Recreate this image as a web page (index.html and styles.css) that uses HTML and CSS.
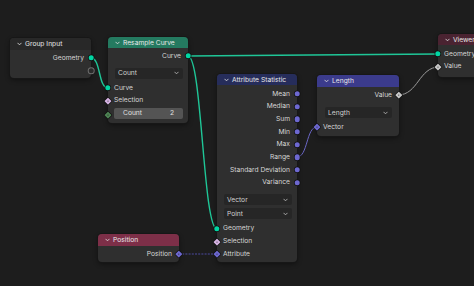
FILE: index.html
```html
<!DOCTYPE html>
<html lang="en">
<head>
  <meta charset="UTF-8" />
  <title>Geometry Nodes</title>
  <link rel="stylesheet" href="styles.css">
</head>
<body>
  <div class="editor">

    <!-- links are drawn under the nodes -->
    <svg class="links" width="474" height="286" viewBox="0 0 474 286">
      <path class="lk geo" d="M91,58 C101,58 98,88 108,88" />
      <path class="lk geo" d="M188,56 C260,56 370,54 439,54" />
      <path class="lk geo" d="M188,56 C202,56 203,229 217,229" />
      <path class="lk val" d="M398,95 C418,95 419,67 439,67" />
      <path class="lk vec" d="M297,157 C308,157 306,127 317,127" />
      <path class="lk vec dash" d="M179,254 L217,254" />
    </svg>

    <!-- Group Input -->
    <div class="node n-group">
      <div class="node-head h-group"><svg class="chev" viewBox="0 0 6 4"><path d="M0.6,0.6 L3,3 L5.4,0.6" /></svg>Group Input</div>
      <div class="node-body">
        <div class="row out">Geometry<span class="sock geo"></span></div>
        <div class="row out"><span class="sock empty"></span></div>
      </div>
    </div>

    <!-- Resample Curve -->
    <div class="node n-resample">
      <div class="node-head h-geo"><svg class="chev" viewBox="0 0 6 4"><path d="M0.6,0.6 L3,3 L5.4,0.6" /></svg>Resample Curve</div>
      <div class="node-body">
        <div class="row out">Curve<span class="sock geo"></span></div>
        <div class="select sel-resample">Count<svg class="chev small" viewBox="0 0 6 4"><path d="M0.6,0.6 L3,3 L5.4,0.6" /></svg></div>
        <div class="row in"><span class="sock geo"></span>Curve</div>
        <div class="row in"><span class="sock field bool"></span>Selection</div>
        <div class="num-row">
          <span class="sock field int"></span>
          <div class="num"><span>Count</span><span>2</span></div>
        </div>
      </div>
    </div>

    <!-- Attribute Statistic -->
    <div class="node n-stat">
      <div class="node-head h-conv"><svg class="chev" viewBox="0 0 6 4"><path d="M0.6,0.6 L3,3 L5.4,0.6" /></svg>Attribute Statistic</div>
      <div class="node-body">
        <div class="row out">Mean<span class="sock vec"></span></div>
        <div class="row out">Median<span class="sock vec"></span></div>
        <div class="row out">Sum<span class="sock vec"></span></div>
        <div class="row out">Min<span class="sock vec"></span></div>
        <div class="row out">Max<span class="sock vec"></span></div>
        <div class="row out">Range<span class="sock vec"></span></div>
        <div class="row out">Standard Deviation<span class="sock vec"></span></div>
        <div class="row out">Variance<span class="sock vec"></span></div>
        <div class="select sel-stat first">Vector<svg class="chev small" viewBox="0 0 6 4"><path d="M0.6,0.6 L3,3 L5.4,0.6" /></svg></div>
        <div class="select sel-stat second">Point<svg class="chev small" viewBox="0 0 6 4"><path d="M0.6,0.6 L3,3 L5.4,0.6" /></svg></div>
        <div class="row in"><span class="sock geo"></span>Geometry</div>
        <div class="row in"><span class="sock field bool"></span>Selection</div>
        <div class="row in"><span class="sock field vecf"></span>Attribute</div>
      </div>
    </div>

    <!-- Length -->
    <div class="node n-length">
      <div class="node-head h-vec"><svg class="chev" viewBox="0 0 6 4"><path d="M0.6,0.6 L3,3 L5.4,0.6" /></svg>Length</div>
      <div class="node-body">
        <div class="row out">Value<span class="sock field valf"></span></div>
        <div class="select sel-length">Length<svg class="chev small" viewBox="0 0 6 4"><path d="M0.6,0.6 L3,3 L5.4,0.6" /></svg></div>
        <div class="row in"><span class="sock field vecf"></span>Vector</div>
      </div>
    </div>

    <!-- Viewer -->
    <div class="node n-viewer">
      <div class="node-head h-out"><svg class="chev" viewBox="0 0 6 4"><path d="M0.6,0.6 L3,3 L5.4,0.6" /></svg>Viewer</div>
      <div class="node-body">
        <div class="row in"><span class="sock geo"></span>Geometry</div>
        <div class="row in"><span class="sock field valf"></span>Value</div>
      </div>
    </div>

    <!-- Position -->
    <div class="node n-position">
      <div class="node-head h-input"><svg class="chev" viewBox="0 0 6 4"><path d="M0.6,0.6 L3,3 L5.4,0.6" /></svg>Position</div>
      <div class="node-body">
        <div class="row out">Position<span class="sock field vecf"></span></div>
      </div>
    </div>

  </div>
</body>
</html>
```

FILE: styles.css
```css
/* base */
*, *::before, *::after { box-sizing: border-box; }
body {
  margin: 0;
  background: #1d1d1d;
  overflow: hidden;
  font-family: Inter, "DejaVu Sans", sans-serif;
}

.editor {
  position: relative;
  width: 474px;
  height: 286px;
  overflow: hidden;
}

/* links */
.links { position: absolute; left: 0; top: 0; }
.lk { fill: none; stroke-width: 1.4; }
.lk.geo { stroke: #1fc697; }
.lk.val { stroke: #9a9a9a; stroke-width: 1; }
.lk.vec { stroke: #6a66c4; stroke-width: 1; }
.lk.dash { stroke: #4c4aa0; stroke-dasharray: 2 1.2; }

/* nodes */
.node {
  position: absolute;
  background: #2f2f2f;
  border-radius: 4px;
  box-shadow: 0 0 0 1px #171717, 0 2px 5px rgba(0, 0, 0, 0.45);
  color: #d6d6d6;
  font-size: 6.7px;
}
.node-head {
  display: flex;
  align-items: center;
  gap: 3px;
  height: 11px;
  padding-left: 7px;
  border-radius: 4px 4px 0 0;
  color: #e8e8e8;
  white-space: nowrap;
}
.chev { width: 5px; height: 4px; flex: none; }
.chev path { fill: none; stroke: #e0e0e0; stroke-width: 1; }
.chev.small path { stroke: #bdbdbd; }

.h-group { background: #282828; height: 12px; }
.h-geo   { background: #247a60; }
.h-conv  { background: #262d5b; }
.h-vec   { background: #3b3b8c; height: 12px; }
.h-out   { background: #4a2331; }
.h-input { background: #7d2f48; height: 12px; }

.node-body { display: flex; flex-direction: column; }

.row {
  position: relative;
  height: 12.7px;
  line-height: 12.7px;
  white-space: nowrap;
}
.row.out { text-align: right; padding-right: 7px; }
.row.in  { padding-left: 6px; }

/* sockets */
.sock {
  position: absolute;
  top: 50%;
  width: 5.4px;
  height: 5.4px;
  border-radius: 50%;
  box-shadow: 0 0 0 0.7px #111;
}
.out .sock { right: 0; transform: translate(50%, -50%); }
.in .sock, .num-row .sock { left: 0; transform: translate(-50%, -50%); }
.sock.geo { background: #00d6a3; }
.sock.vec { background: #6d68d0; }
.sock.empty { background: #2a2a2a; box-shadow: 0 0 0 1px #6e6e6e; }

.sock.field {
  width: 4.8px;
  height: 4.8px;
  border-radius: 0.5px;
}
.out .sock.field { transform: translate(50%, -50%) rotate(45deg); }
.in .sock.field, .num-row .sock.field { transform: translate(-50%, -50%) rotate(45deg); }
.sock.field::after {
  content: "";
  position: absolute;
  left: 1.6px;
  top: 1.6px;
  width: 1.6px;
  height: 1.6px;
  border-radius: 50%;
  background: #1f1f1f;
}
.sock.bool { background: #d6b3e3; }
.sock.int  { background: #4e8454; }
.sock.vecf { background: #6d68d0; }
.sock.valf { background: #c8c8c8; }

/* dropdowns */
.select {
  display: flex;
  align-items: center;
  justify-content: space-between;
  height: 11px;
  padding: 0 4px 0 3px;
  border-radius: 2px;
  background: #262626;
  color: #d0d0d0;
}

/* number field */
.num-row { position: relative; padding: 1px 5px 4px 6px; }
.num {
  display: flex;
  justify-content: space-between;
  height: 11px;
  line-height: 11px;
  padding: 0 9px;
  border-radius: 2px;
  background: #545454;
  color: #e0e0e0;
}

/* Group Input */
.n-group { left: 10px; top: 38px; width: 81px; }
.n-group .node-body { padding: 1.6px 0 1px; }

/* Resample Curve */
.n-resample { left: 108px; top: 37px; width: 80px; }
.n-resample .node-body { padding-top: 1.5px; }
.sel-resample { margin: 5.8px 5px 2.6px 7px; }

/* Attribute Statistic */
.n-stat { left: 217px; top: 74px; width: 80px; }
.n-stat .node-body { padding: 2.6px 0 1.2px; }
.sel-stat { margin: 0 5px 0 7px; }
.sel-stat.first { margin-top: 5.3px; }
.sel-stat.second { margin-top: 3px; margin-bottom: 3.1px; }

/* Length */
.n-length { left: 317px; top: 75px; width: 82px; }
.n-length .node-body { padding: 1.6px 0 2.6px; }
.sel-length { margin: 6.1px 7px 2.2px 8px; }

/* Viewer */
.n-viewer { left: 438px; top: 34px; width: 60px; }
.n-viewer .node-body { padding: 2.6px 0 4px; }

/* Position */
.n-position { left: 98px; top: 234px; width: 81px; }
.n-position .node-body { padding: 1.6px 0 1.6px; }
```
